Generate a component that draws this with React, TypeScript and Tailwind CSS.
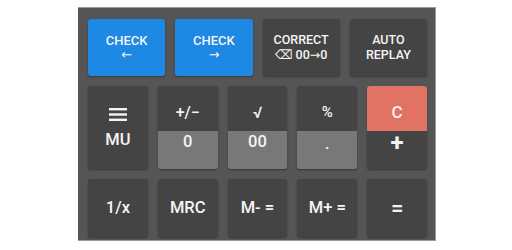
import React from "react";

const font = { fontFamily: "Roboto, 'DejaVu Sans', sans-serif" };

function Tile({ children, className = "" }: { children?: React.ReactNode; className?: string }) {
  return (
    <div
      className={`rounded-[3px] shadow-[0_1px_2px_rgba(0,0,0,0.35)] flex flex-col items-center justify-center text-[#f4f4f4] font-medium ${className}`}
    >
      {children}
    </div>
  );
}

function Split({ top, bottom, topClass = "bg-[#444444]", bottomClass = "bg-[#787878]" }: { top: React.ReactNode; bottom: React.ReactNode; topClass?: string; bottomClass?: string }) {
  return (
    <div className="rounded-[3px] overflow-hidden shadow-[0_1px_2px_rgba(0,0,0,0.35)] flex flex-col text-[#f4f4f4] font-medium">
      <div className={`h-[45px] flex items-center justify-center pt-[8px] ${topClass}`}>{top}</div>
      <div className={`flex-1 flex justify-center pt-[2px] ${bottomClass}`}>{bottom}</div>
    </div>
  );
}

export default function App() {
  return (
    <div className="w-[512px] h-[250px] bg-white" style={font}>
      <div className="pt-[7px] pl-[78px]">
        <div className="w-[358px] h-[234px] bg-[#555555] border-t border-r border-b border-[#9a9a9a] pt-[11px] pl-[10px] pr-[8px]">
          <div className="grid grid-cols-4 gap-x-[10px] h-[57px]">
            <Tile className="bg-[#1e88e5] text-[13px] leading-[14px]">
              <span>CHECK</span>
              <span className="text-[13px] leading-[14px]">←</span>
            </Tile>
            <Tile className="bg-[#1e88e5] text-[13px] leading-[14px]">
              <span>CHECK</span>
              <span className="text-[13px] leading-[14px]">→</span>
            </Tile>
            <Tile className="bg-[#444444] text-[12.5px] leading-[14.5px]">
              <span>CORRECT</span>
              <span>⌫ 00→0</span>
            </Tile>
            <Tile className="bg-[#444444] text-[12.5px] leading-[14.5px]">
              <span>AUTO</span>
              <span>REPLAY</span>
            </Tile>
          </div>
          <div className="grid grid-cols-5 gap-x-[10px] h-[83px] mt-[10px] text-[15px]">
            <Tile className="bg-[#444444] justify-start pt-[22px]">
              <svg width="18" height="13" viewBox="0 0 18 13">
                <rect x="0" y="0" width="18" height="2.4" fill="#f4f4f4" />
                <rect x="0" y="5.3" width="18" height="2.4" fill="#f4f4f4" />
                <rect x="0" y="10.6" width="18" height="2.4" fill="#f4f4f4" />
              </svg>
              <span className="mt-[10px] text-[16.5px] leading-[18px]">MU</span>
            </Tile>
            <Split top={<span className="text-[16px]">+/−</span>} bottom={<span className="text-[16.5px] leading-[18px]">0</span>} />
            <Split top={<span className="text-[16px]">√</span>} bottom={<span className="text-[16.5px] leading-[18px]">00</span>} />
            <Split top={<span className="text-[15px]">%</span>} bottom={<span className="text-[16px] leading-[22px]">.</span>} />
            <Split
              topClass="bg-[#e07363]"
              bottomClass="bg-[#444444]"
              top={<span className="text-[17px]">C</span>}
              bottom={<span className="text-[24px] leading-[20px] font-bold">+</span>}
            />
          </div>
          <div className="grid grid-cols-5 gap-x-[10px] h-[58px] mt-[10px] text-[16.5px]">
            <Tile className="bg-[#444444]">1/x</Tile>
            <Tile className="bg-[#444444]">MRC</Tile>
            <Tile className="bg-[#444444]">
              <span>M- <span className="font-bold">=</span></span>
            </Tile>
            <Tile className="bg-[#444444]">
              <span>M+ <span className="font-bold">=</span></span>
            </Tile>
            <Tile className="bg-[#444444] text-[22px] font-bold">=</Tile>
          </div>
        </div>
      </div>
    </div>
  );
}
